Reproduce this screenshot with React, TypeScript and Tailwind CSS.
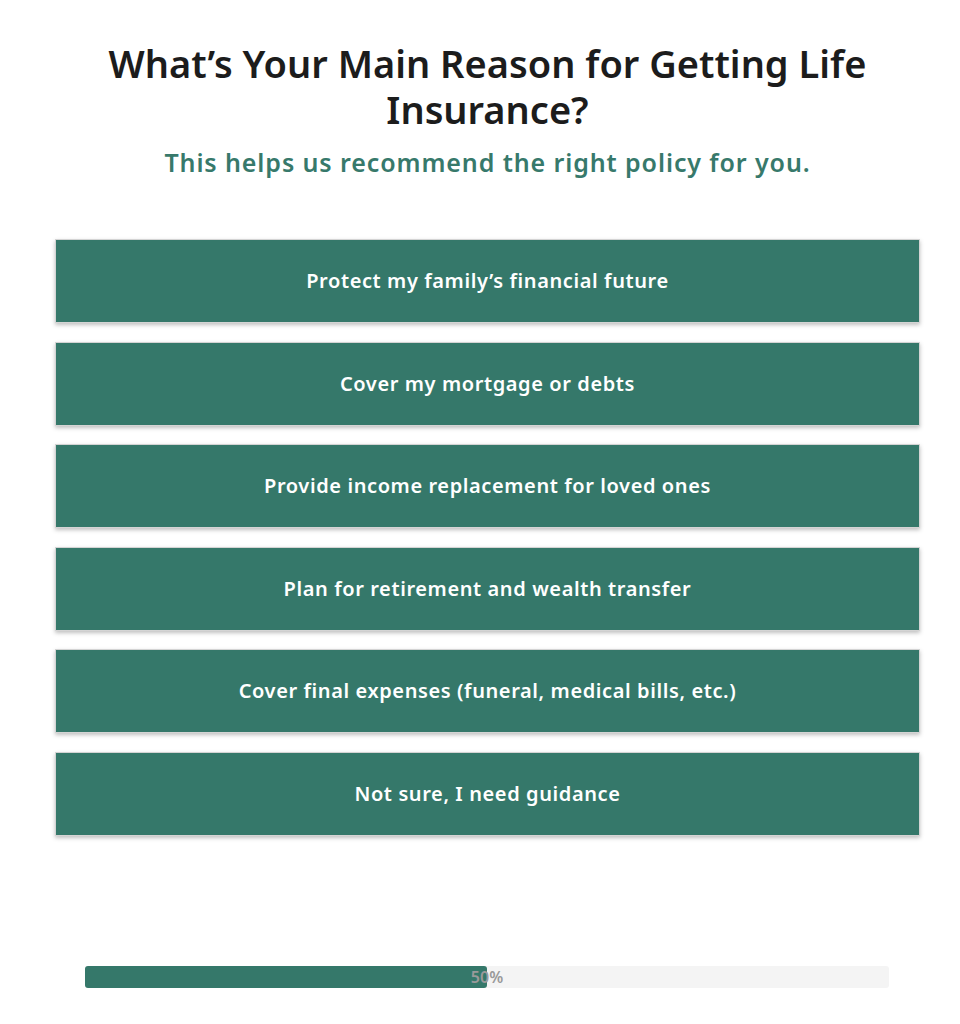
import React from "react";

const options = [
  "Protect my family\u2019s financial future",
  "Cover my mortgage or debts",
  "Provide income replacement for loved ones",
  "Plan for retirement and wealth transfer",
  "Cover final expenses (funeral, medical bills, etc.)",
  "Not sure, I need guidance",
];

export default function App() {
  return (
    <div
      className="w-[960px] h-[1024px] bg-white overflow-hidden"
      style={{ fontFamily: "'Noto Sans', Lato, Arial, sans-serif" }}
    >
      <div className="ml-[55px] w-[865px] pt-[40px]">
        <h1 className="text-center text-[38px] leading-[46px] font-semibold text-[#1c1c1c]">
          What&rsquo;s Your Main Reason for Getting Life Insurance?
        </h1>
        <p className="mt-[14px] text-center text-[25px] leading-[32px] tracking-[0.9px] font-semibold text-[#37796b]">
          This helps us recommend the right policy for you.
        </p>
        <div className="mt-[61px] flex flex-col gap-[18.6px]">
          {options.map((o) => (
            <button
              key={o}
              className="h-[84px] w-full bg-[#35786a] border border-[#d4d4d4] shadow-[0_2px_4px_rgba(0,0,0,0.25)] text-white text-[20px] tracking-[0.6px] font-semibold flex items-center justify-center"
            >
              {o}
            </button>
          ))}
        </div>
      </div>
      <div className="ml-[85px] w-[804px] mt-[130px] relative h-[22px] bg-[#f4f4f4] rounded-[3px]">
        <div className="absolute left-0 top-0 h-full w-1/2 bg-[#35786a] rounded-[3px]" />
        <div className="absolute inset-0 flex items-center justify-center text-[16px] font-semibold text-[#9a9a9a]">
          50%
        </div>
      </div>
    </div>
  );
}
